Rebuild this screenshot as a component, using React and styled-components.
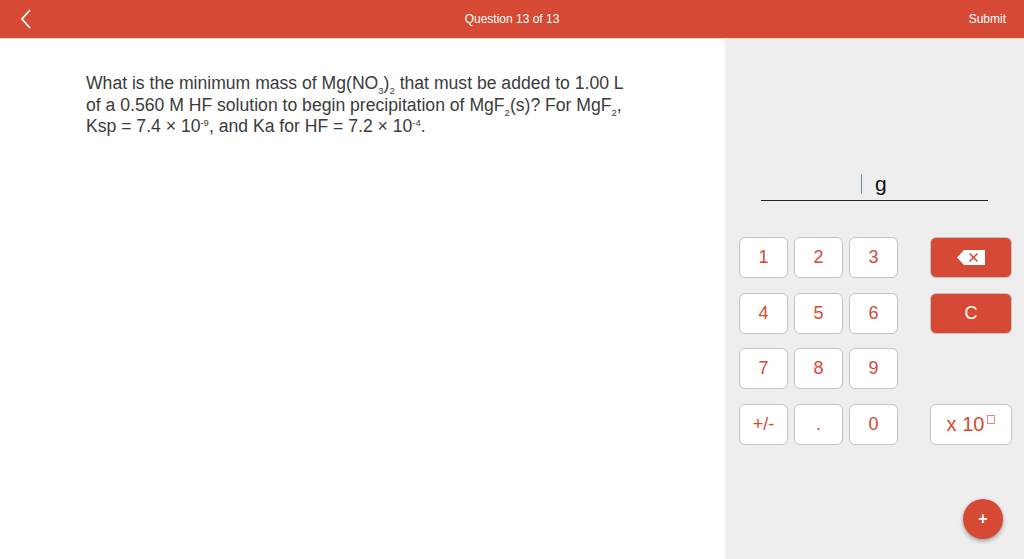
import React from 'react';
import styled, { createGlobalStyle } from 'styled-components';

const GlobalStyle = createGlobalStyle`
  html, body {
    margin: 0;
    padding: 0;
    background: #ffffff;
    font-family: 'Liberation Sans', Arial, sans-serif;
  }
`;

const RED = '#d64a35';

const Page = styled.div`
  width: 1024px;
  height: 559px;
  display: flex;
  flex-direction: column;
  overflow: hidden;
`;

const Header = styled.header`
  height: 38px;
  background: ${RED};
  display: grid;
  grid-template-columns: 1fr auto 1fr;
  align-items: center;
  color: #fff;
  font-size: 12px;
  border-bottom: 1px solid #f2d6d1;
`;

const BackButton = styled.div`
  padding-left: 20px;
  display: flex;
  align-items: center;
`;

const Title = styled.div`
  text-align: center;
`;

const SubmitLink = styled.div`
  text-align: right;
  padding-right: 18px;
`;

const Body = styled.div`
  flex: 1;
  display: flex;
`;

const Question = styled.div`
  flex: 0 0 725px;
  padding: 34px 0 0 86px;
  box-sizing: border-box;
  font-size: 17.6px;
  line-height: 21.5px;
  color: #3b3b3b;
`;

const QText = styled.p`
  margin: 0;
  width: 550px;
`;

const Sub = styled.span`
  position: relative;
  font-size: 9.5px;
  top: 5px;
  line-height: 0;
`;

const Sup = styled.span`
  position: relative;
  font-size: 9.5px;
  top: -6px;
  line-height: 0;
`;

const Panel = styled.div`
  flex: 1;
  background: #eeeeee;
  position: relative;
  padding-top: 136px;
  box-sizing: border-box;
`;

const AnswerLine = styled.div`
  margin-left: 36px;
  width: 227px;
  height: 26px;
  border-bottom: 1.5px solid #222;
  display: flex;
  align-items: flex-end;
  padding: 0 0 2px 100px;
  box-sizing: border-box;
`;

const Cursor = styled.span`
  width: 1px;
  height: 20px;
  background: #6a8ab5;
  margin-right: 13px;
  margin-bottom: 4px;
`;

const Unit = styled.span`
  font-size: 21px;
  color: #111;
  line-height: 24px;
  margin-bottom: 2px;
`;

const Keypad = styled.div`
  margin: 36px 0 0 14px;
  display: flex;
  flex-direction: column;
  gap: 14.5px;
`;

const KeyRow = styled.div`
  display: flex;
  gap: 6px;
  height: 41px;
`;

const Key = styled.div`
  box-sizing: border-box;
  width: ${p => (p.$wide ? '82px' : '49px')};
  margin-left: ${p => (p.$wide ? '26px' : '0')};
  border-radius: 6px;
  border: 1px solid #c4c4c4;
  background: ${p => (p.$accent ? RED : '#ffffff')};
  color: ${p => (p.$accent ? '#ffffff' : RED)};
  display: flex;
  align-items: center;
  justify-content: center;
  font-size: ${p => (p.$large ? '20px' : '18px')};
`;

const Box = styled.span`
  display: inline-block;
  width: 8px;
  height: 9px;
  border: 1px solid #e08d80;
  box-sizing: border-box;
  margin-left: 3px;
  position: relative;
  top: -5px;
`;

const Fab = styled.div`
  position: absolute;
  left: 238px;
  top: 460px;
  width: 40px;
  height: 40px;
  border-radius: 50%;
  background: ${RED};
  color: #fff;
  display: flex;
  align-items: center;
  justify-content: center;
  font-size: 16px;
  font-weight: bold;
  box-shadow: 0 2px 4px rgba(0, 0, 0, 0.35);
`;

const BackspaceIcon = () => (
  <svg width="28" height="15" viewBox="0 0 28 15">
    <path d="M7 0 H28 V15 H7 L0 7.5 Z" fill="#fff" />
    <path d="M12.5 3.5 L20.5 11.5 M20.5 3.5 L12.5 11.5" stroke={RED} strokeWidth="1.6" />
  </svg>
);

const rows = [
  { keys: ['1', '2', '3'], side: { accent: true, content: <BackspaceIcon /> } },
  { keys: ['4', '5', '6'], side: { accent: true, content: 'C' } },
  { keys: ['7', '8', '9'] },
  { keys: ['+/-', '.', '0'], side: { large: true, content: <>x 10<Box /></> } },
];

const App = () => (
  <Page>
    <GlobalStyle />
    <Header>
      <BackButton>
        <svg width="12" height="20" viewBox="0 0 12 20">
          <path d="M10 1 L2 10 L10 19" stroke="#fff" strokeWidth="1.8" fill="none" />
        </svg>
      </BackButton>
      <Title>Question 13 of 13</Title>
      <SubmitLink>Submit</SubmitLink>
    </Header>
    <Body>
      <Question>
        <QText>
          What is the minimum mass of Mg(NO<Sub>3</Sub>)<Sub>2</Sub> that must be added to 1.00 L
          of a 0.560 M HF solution to begin precipitation of MgF<Sub>2</Sub>(s)? For MgF<Sub>2</Sub>,
          Ksp = 7.4 × 10<Sup>-9</Sup>, and Ka for HF = 7.2 × 10<Sup>-4</Sup>.
        </QText>
      </Question>
      <Panel>
        <AnswerLine>
          <Cursor />
          <Unit>g</Unit>
        </AnswerLine>
        <Keypad>
          {rows.map((row, i) => (
            <KeyRow key={i}>
              {row.keys.map(k => (
                <Key key={k}>{k}</Key>
              ))}
              {row.side && (
                <Key $wide $accent={row.side.accent} $large={row.side.large}>
                  {row.side.content}
                </Key>
              )}
            </KeyRow>
          ))}
        </Keypad>
        <Fab>+</Fab>
      </Panel>
    </Body>
  </Page>
);

export default App;
